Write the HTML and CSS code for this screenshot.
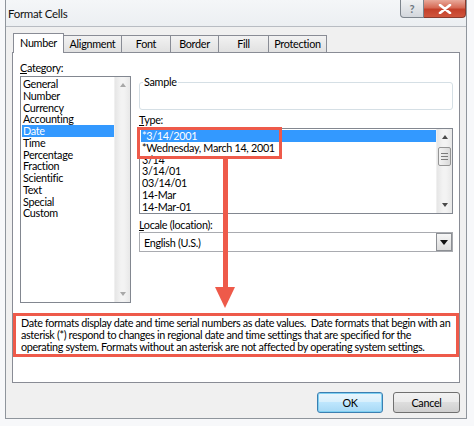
FILE: index.html
```html
<!DOCTYPE html>
<html>
<head>
<meta charset="utf-8">
<link rel="stylesheet" href="styles.css">
</head>
<body>
<div class="window">
  <div class="titlebar">
    <span class="title">Format Cells</span>
    <div class="caption">
      <div class="cap help">?</div>
      <div class="cap close">
        <svg width="14" height="10" viewBox="0 0 14 10"><path d="M2 1 L12 9 M12 1 L2 9" stroke="#fff" stroke-width="2.6" stroke-linecap="round"/></svg>
      </div>
    </div>
  </div>
  <div class="client">
    <div class="tabs">
      <div class="tab active">Number</div>
      <div class="tab">Alignment</div>
      <div class="tab">Font</div>
      <div class="tab">Border</div>
      <div class="tab">Fill</div>
      <div class="tab">Protection</div>
    </div>
    <div class="panel">
      <div class="cols">
        <div class="catcol">
          <div class="lbl"><u>C</u>ategory:</div>
          <div class="listbox cat">
            <ul class="items">
              <li>General</li>
              <li>Number</li>
              <li>Currency</li>
              <li>Accounting</li>
              <li class="sel">Date</li>
              <li>Time</li>
              <li>Percentage</li>
              <li>Fraction</li>
              <li>Scientific</li>
              <li>Text</li>
              <li>Special</li>
              <li>Custom</li>
            </ul>
            <div class="vscroll disabled">
              <div class="arr up"></div>
              <div class="track"></div>
              <div class="arr down"></div>
            </div>
          </div>
        </div>
        <div class="rightcol">
          <fieldset class="sample"><legend>Sample</legend></fieldset>
          <div class="lbl"><u>T</u>ype:</div>
          <div class="listbox type">
            <ul class="items">
              <li class="sel">*3/14/2001</li>
              <li>*Wednesday, March 14, 2001</li>
              <li>3/14</li>
              <li>3/14/01</li>
              <li>03/14/01</li>
              <li>14-Mar</li>
              <li>14-Mar-01</li>
            </ul>
            <div class="vscroll">
              <div class="arr up"></div>
              <div class="track"><div class="thumb"><span></span><span></span><span></span></div></div>
              <div class="arr down"></div>
            </div>
            <div class="callout"></div>
          </div>
          <div class="lbl locale"><u>L</u>ocale (location):</div>
          <div class="combo">
            <span class="combo-text">English (U.S.)</span>
            <span class="dd"></span>
          </div>
        </div>
      </div>
      <p class="desc">Date formats display date and time serial numbers as date values.&nbsp; Date formats that begin with an<br>asterisk (*) respond to changes in regional date and time settings that are specified for the<br>operating system. Formats without an asterisk are not affected by operating system settings.</p>
    </div>
    <div class="footer">
      <div class="btn default">OK</div>
      <div class="btn">Cancel</div>
    </div>
  </div>
  <div class="arrow-shaft"></div>
  <div class="arrow-head"></div>
</div>
</body>
</html>
```
FILE: styles.css
```css
* { box-sizing: border-box; }
html, body { margin: 0; padding: 0; }
body {
  width: 474px;
  height: 426px;
  background: #f7f8fa;
  font-family: Lato, "Open Sans", sans-serif;
  font-size: 10.8px;
  letter-spacing: -0.3px;
  color: #000;
  overflow: hidden;
}
.window {
  position: relative;
  margin-left: 5px;
  width: 462px;
  height: 419px;
  border-left: 1px solid #8f959c;
  border-right: 1px solid #8f959c;
  border-bottom: 1px solid #8f959c;
  background: #eef1f4;
}
.titlebar {
  height: 26px;
  display: flex;
  justify-content: space-between;
  align-items: flex-start;
  background: linear-gradient(#f4f6f8, #eceff2);
}
.title {
  font-size: 11.5px;
  padding-left: 2px;
  padding-top: 6px;
  line-height: 15px;
  color: #111;
}
.caption { display: flex; }
.cap {
  height: 18px;
  display: flex;
  align-items: center;
  justify-content: center;
}
.help {
  width: 24px;
  border: 1px solid #7d848c;
  border-top: none;
  border-radius: 0 0 0 4px;
  background: linear-gradient(#f0f1f3, #d3d7dc);
  color: #6d7680;
  font-size: 11px;
  font-weight: bold;
}
.close {
  width: 42px;
  border: 1px solid #8a3a2c;
  border-top: none;
  border-left: none;
  border-radius: 0 0 4px 0;
  background: linear-gradient(#e9a99a, #d66a55 45%, #c4402a 55%, #d0553c);
}
.client {
  border-top: 1px solid #b8bcc2;
  background: #f0f0f0;
  padding: 6px 6px 0 6px;
  height: 392px;
}
.tabs {
  display: flex;
  height: 19px;
  align-items: flex-end;
  padding-left: 1px;
}
.tab {
  height: 17px;
  line-height: 15px;
  padding: 0 3px;
  border: 1px solid #898c95;
  border-bottom: none;
  border-left: none;
  background: linear-gradient(#f2f2f2, #e1e1e1);
  text-align: center;
}
.tab:nth-child(2) { width: 58px; }
.tab:nth-child(3) { width: 49px; }
.tab:nth-child(4) { width: 48px; }
.tab:nth-child(5) { width: 50px; }
.tab:nth-child(6) { width: 58px; }
.tab.active {
  width: 51px;
  height: 20px;
  line-height: 18px;
  margin-bottom: -1px;
  background: #fff;
  border-left: 1px solid #898c95;
  position: relative;
  z-index: 1;
}
.panel {
  height: 331px;
  background: #fff;
  border: 1px solid #898c95;
  padding: 8px 6px 0 7px;
}
.cols {
  display: flex;
  gap: 8px;
}
.catcol { width: 111px; }
.rightcol { width: 314px; padding-top: 15px; }
.lbl {
  line-height: 13px;
  height: 13px;
}
.lbl u { text-decoration: underline; text-underline-offset: 1px; }
.catcol .lbl { margin-bottom: 2px; }
.listbox {
  position: relative;
  display: flex;
  border: 1px solid #828790;
  background: #fff;
}
.listbox.cat { height: 227px; }
.listbox.type { height: 86px; margin-top: 2px; }
.items {
  list-style: none;
  margin: 0;
  padding: 1px 0 0 1px;
  flex: 1;
}
.items li {
  height: 11.75px;
  line-height: 11.75px;
  padding-left: 1px;
  white-space: nowrap;
}
.items li.sel {
  background: #3399ff;
  color: #fff;
}
.vscroll {
  width: 16px;
  display: flex;
  flex-direction: column;
  background: linear-gradient(90deg, #e6e6e6, #f3f3f3 40%, #f3f3f3 60%, #e8e8e8);
  border-left: 1px solid #f0f0f0;
}
.arr {
  height: 16px;
  display: flex;
  align-items: center;
  justify-content: center;
}
.arr::before {
  content: "";
  border-left: 3.5px solid transparent;
  border-right: 3.5px solid transparent;
}
.arr.up::before { border-bottom: 4px solid #4a4a4a; }
.arr.down::before { border-top: 4px solid #4a4a4a; }
.vscroll.disabled .arr.up::before { border-bottom-color: #a8a8a8; }
.vscroll.disabled .arr.down::before { border-top-color: #a8a8a8; }
.track { flex: 1; position: relative; }
.thumb {
  margin: 2px 1px 0 1px;
  height: 19px;
  border: 1px solid #959595;
  border-radius: 2px;
  background: linear-gradient(90deg, #f2f2f2, #e6e6e6 50%, #d9d9d9);
  display: flex;
  flex-direction: column;
  align-items: center;
  justify-content: center;
  gap: 2px;
}
.thumb span {
  width: 7px;
  height: 1px;
  background: #7a7a7a;
}
.sample {
  margin: 0;
  padding: 0;
  height: 34px;
  border: 1px solid #d5dfe5;
  border-radius: 3px;
}
.sample legend {
  padding: 0 1px;
  margin-left: 3px;
  line-height: 12px;
}
.rightcol > .lbl { margin-top: 3px; }
.rightcol > .lbl.locale { margin-top: 4px; }
.callout {
  position: absolute;
  left: -3px;
  top: -2px;
  width: 145px;
  height: 32px;
  border: 3px solid #ee5a4a;
}
.combo {
  margin-top: 1px;
  height: 20px;
  border: 1px solid #a9abb0;
  display: flex;
  align-items: center;
  justify-content: space-between;
  padding-left: 4px;
  background: #fff;
}
.dd {
  width: 16px;
  height: 18px;
  border: 1px solid #8c8f94;
  background: linear-gradient(#f6f6f6, #dcdcdc);
  display: flex;
  align-items: center;
  justify-content: center;
}
.dd::before {
  content: "";
  border-left: 4px solid transparent;
  border-right: 4px solid transparent;
  border-top: 5px solid #111;
}
.desc {
  margin: 10px 0 0 -7px;
  width: 446px;
  height: 44px;
  border: 3px solid #ee5a4a;
  padding: 1px 0 0 5px;
  line-height: 12.2px;
  letter-spacing: -0.35px;
  white-space: nowrap;
}
.footer {
  display: flex;
  justify-content: flex-end;
  gap: 10px;
  padding-top: 9px;
}
.btn {
  width: 67px;
  height: 21px;
  border: 1px solid #707070;
  border-radius: 3px;
  background: linear-gradient(#f2f2f2 0%, #ebebeb 45%, #dddddd 50%, #cfcfcf 100%);
  display: flex;
  align-items: center;
  justify-content: center;
}
.btn.default {
  width: 66px;
  border-color: #3c7fb1;
  box-shadow: inset 0 0 0 1px #7fd0f2;
  background: linear-gradient(#eaf6fd 0%, #d9f0fc 45%, #bee6fd 50%, #a7d9f5 100%);
}
.arrow-shaft {
  position: absolute;
  left: 217px;
  top: 159px;
  width: 5px;
  height: 130px;
  background: #ee5a4a;
}
.arrow-head {
  position: absolute;
  left: 209px;
  top: 287px;
  width: 0;
  height: 0;
  border-left: 10px solid transparent;
  border-right: 10px solid transparent;
  border-top: 21px solid #ee5a4a;
}
```
